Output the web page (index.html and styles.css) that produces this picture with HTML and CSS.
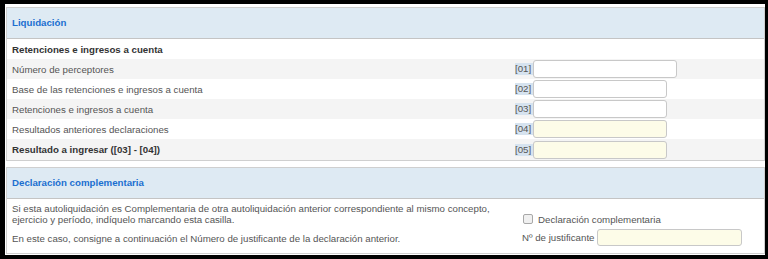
FILE: index.html
```html
<!DOCTYPE html>
<html lang="es">
<head>
<meta charset="utf-8">
<title>Liquidación</title>
<link rel="stylesheet" href="styles.css">
</head>
<body>
<div class="frame">
  <section class="panel">
    <div class="panel-head">Liquidación</div>
    <div class="row sub">Retenciones e ingresos a cuenta</div>
    <div class="row alt">
      <span class="lbl">Número de perceptores</span>
      <span class="code">[01]</span><span class="box wide"></span>
    </div>
    <div class="row">
      <span class="lbl">Base de las retenciones e ingresos a cuenta</span>
      <span class="code">[02]</span><span class="box"></span>
    </div>
    <div class="row alt">
      <span class="lbl">Retenciones e ingresos a cuenta</span>
      <span class="code">[03]</span><span class="box"></span>
    </div>
    <div class="row">
      <span class="lbl">Resultados anteriores declaraciones</span>
      <span class="code">[04]</span><span class="box ro"></span>
    </div>
    <div class="row alt strong">
      <span class="lbl">Resultado a ingresar ([03] - [04])</span>
      <span class="code">[05]</span><span class="box ro"></span>
    </div>
  </section>
  <section class="panel second">
    <div class="panel-head">Declaración complementaria</div>
    <div class="comp">
      <div class="comp-text">
        <p class="p1">Si esta autoliquidación es Complementaria de otra autoliquidación anterior correspondiente al mismo concepto, ejercicio y período, indíquelo marcando esta casilla.</p>
        <p class="p2">En este caso, consigne a continuación el Número de justificante de la declaración anterior.</p>
      </div>
      <div class="comp-side">
        <label class="chk"><span class="cbox"></span>Declaración complementaria</label>
        <div class="just"><span>Nº de justificante</span><span class="box ro jbox"></span></div>
      </div>
    </div>
  </section>
</div>
</body>
</html>
```
FILE: styles.css
```css
html, body {
  margin: 0;
  padding: 0;
  background: #000;
}
body {
  font-family: "Liberation Sans", Arial, sans-serif;
  font-size: 9.7px;
  color: #555;
}
.frame {
  margin: 4px 3px 0 5px;
  height: 251px;
  background: #fff;
  padding: 3px 0 0 1px;
  box-sizing: border-box;
}
.panel {
  border: 1px solid #cfcfcf;
  background: #fff;
}
.panel.second {
  margin-top: 6px;
}
.panel-head {
  background: #deeaf3;
  height: 30px;
  line-height: 30px;
  padding-left: 5px;
  font-weight: bold;
  color: #1b6fd0;
  border-bottom: 1px solid #c4c4c4;
}
.row {
  height: 20px;
  display: flex;
  align-items: center;
  padding-left: 5px;
}
.row.strong {
  height: 21px;
}
.row.sub {
  font-weight: bold;
  color: #333;
}
.row.alt {
  background: #f4f4f4;
}
.row.strong .lbl {
  font-weight: bold;
  color: #333;
}
.lbl {
  width: 503px;
  flex: none;
}
.code {
  width: 18px;
  flex: none;
  background: #d6e3ef;
  color: #555;
  line-height: 12px;
}
.box {
  display: block;
  height: 16px;
  width: 132px;
  border: 1px solid #c8c8c8;
  border-radius: 3px;
  background: #fff;
  flex: none;
}
.box.wide {
  width: 142px;
}
.box.ro {
  background: #fdfce8;
}
.comp {
  display: flex;
  padding: 4px 0 0 5px;
  height: 54px;
  box-sizing: border-box;
}
.comp-text {
  width: 500px;
  flex: none;
}
.comp-text p {
  margin: 0;
  line-height: 11px;
}
.comp-text .p2 {
  margin-top: 8px;
}
.comp-side {
  padding-left: 10px;
  padding-top: 10px;
}
.chk {
  display: flex;
  align-items: center;
  height: 12px;
  padding-left: 1px;
}
.cbox {
  width: 8px;
  height: 8px;
  border: 1px solid #a8a8a8;
  border-radius: 2px;
  background: #f0f0f0;
  margin-right: 5px;
}
.just {
  display: flex;
  align-items: center;
  margin-top: 4px;
  gap: 3px;
}
.jbox {
  width: 143px;
  height: 15px;
}
```
